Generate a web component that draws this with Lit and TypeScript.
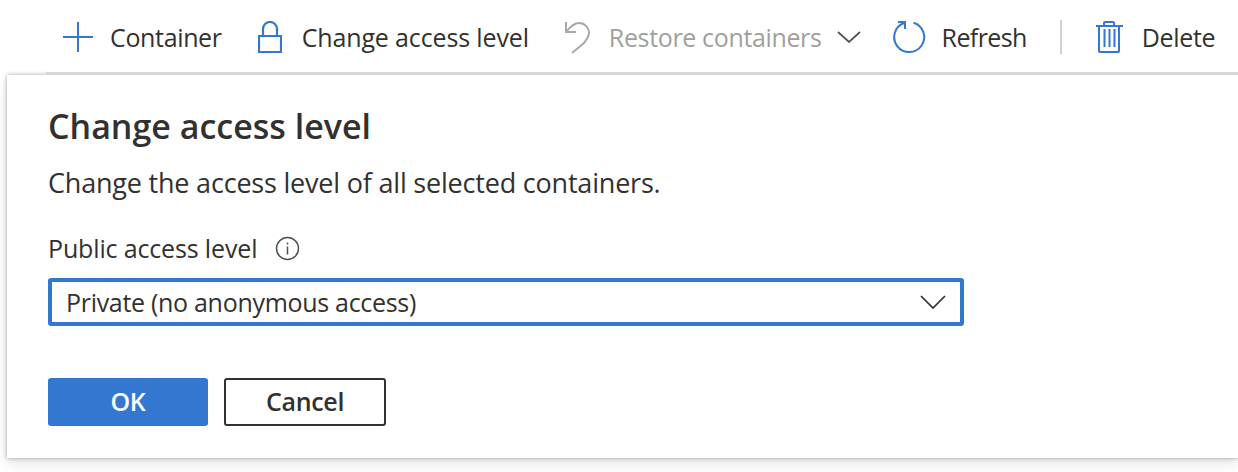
import { LitElement, html, css } from "lit";
import { customElement } from "lit/decorators.js";

@customElement("app-root")
export class AppRoot extends LitElement {
  static styles = css`
    :host {
      display: block;
      width: 1238px;
      height: 472px;
      overflow: hidden;
      background: #fff;
      font-family: "Open Sans", "Noto Sans", sans-serif;
      color: #323130;
      -webkit-font-smoothing: antialiased;
    }
    .toolbar {
      position: relative;
      z-index: 1;
      background: #fff;
      height: 75px;
      display: flex;
      align-items: center;
      margin-left: 46px;
      padding-left: 17px;
      padding-top: 2px;
      box-sizing: border-box;
      font-size: 25px;
      white-space: nowrap;
      border-bottom: 3px solid #d8d8d8;
    }
    .item { display: flex; align-items: center; }
    .item svg { display: block; flex: none; }
    .lbl { letter-spacing: -0.35px; }
    .lock-lbl { letter-spacing: -0.14px; margin-left: 20px; }
    .ref-lbl { letter-spacing: -0.6px; margin-left: 16px; }
    .del-lbl { letter-spacing: -0.35px; margin-left: 19px; }
    .dis { color: #a19f9d; }
    .sep { width: 2px; height: 34px; background: #d2d0ce; }
    .panel {
      margin: 0 0 0 7px;
      height: 383px;
      box-sizing: border-box;
      background: #fff;
      box-shadow: 0 0 4px rgba(0,0,0,.35), 0 6px 12px rgba(0,0,0,.1);
      padding: 27px 0 0 41px;
      position: relative;
    }
    h1 { margin: 0; font-size: 34px; line-height: 48px; font-weight: 600; letter-spacing: 0; }
    .desc { margin-top: 14px; font-size: 27px; line-height: 38px; letter-spacing: -0.2px; }
    .label { margin-top: 27px; display: flex; align-items: center; gap: 18px; font-size: 25px; line-height: 38px; letter-spacing: -0.15px; }
    .select {
      margin-top: 11px;
      width: 916px;
      height: 48px;
      box-sizing: border-box;
      border: 4px solid #3277d0;
      border-radius: 3px;
      display: flex;
      align-items: center;
      justify-content: space-between;
      padding: 0 14px;
      font-size: 25px;
      letter-spacing: -0.3px;
    }
    .btns { margin-top: 52px; display: flex; gap: 16px; }
    .btn {
      height: 48px;
      box-sizing: border-box;
      display: flex;
      align-items: center;
      justify-content: center;
      border-radius: 3px;
      font-size: 25px;
      font-weight: 600;
      letter-spacing: -0.3px;
      padding-bottom: 2px;
    }
    .ok { width: 160px; background: #3477d0; color: #fff; }
    .cancel { width: 162px; border: 2px solid #323130; background: #fff; }
  `;

  render() {
    return html`
      <div class="toolbar">
        <div class="item">
          <svg width="30" height="30" viewBox="0 0 30 30" fill="none" stroke="#3277d0" stroke-width="2"><path d="M15 0v30M0 15h30"/></svg>
          <span class="lbl" style="margin-left:17px">Container</span>
        </div>
        <div class="item" style="margin-left:36px">
          <svg width="24" height="32" viewBox="0 0 24 32" fill="none" stroke="#3277d0" stroke-width="2.200"><path d="M1 15h22v16H1zM5 15V8a7 7 0 0 1 14 0v7"/></svg>
          <span class="lock-lbl">Change access level</span>
        </div>
        <div class="item" style="margin-left:35px">
          <svg width="26" height="33" viewBox="0 0 26 33" fill="none" stroke="#a8a8a8" stroke-width="2"><path d="M2 1v10h10M2 11C6 6 10 2 15 2c6 0 10 5 10 10 0 4-3 7-5 10L8 32"/></svg>
          <span class="lbl dis" style="margin-left:19px">Restore containers</span>
          <svg style="margin-left:15px" width="24" height="12" viewBox="0 0 24 12" fill="none" stroke="#505050" stroke-width="1.700"><path d="M1 1l11 10L23 1"/></svg>
        </div>
        <div class="item" style="margin-left:32px">
          <svg width="33" height="33" viewBox="0 0 33 33" fill="none" stroke="#3277d0" stroke-width="2"><path d="M20.500 1.700A15 15 0 1 1 11 2M5 1h7v7"/></svg>
          <span class="ref-lbl">Refresh</span>
        </div>
        <div class="sep" style="margin-left:33px"></div>
        <div class="item" style="margin-left:34px">
          <svg width="27" height="32" viewBox="0 0 27 32" fill="none" stroke="#3277d0" stroke-width="2"><path d="M0 5h27M3 5v25a1 1 0 0 0 1 1h18a1 1 0 0 0 1-1V5M8 5V2a1 1 0 0 1 1-1h8a1 1 0 0 1 1 1v3M8.500 8v18M13.500 8v18M18.500 8v18"/></svg>
          <span class="del-lbl">Delete</span>
        </div>
      </div>
      <div class="panel">
        <h1>Change access level</h1>
        <div class="desc">Change the access level of all selected containers.</div>
        <div class="label">
          <span>Public access level</span>
          <svg width="25" height="25" viewBox="0 0 25 25" fill="none" stroke="#505050" stroke-width="1.500"><circle cx="12.500" cy="12.500" r="11"/><path d="M12.500 10.500v8M12.500 6.500v2"/></svg>
        </div>
        <div class="select">
          <span>Private (no anonymous access)</span>
          <svg width="26" height="14" viewBox="0 0 26 14" fill="none" stroke="#323130" stroke-width="1.700"><path d="M1 1l12 12L25 1"/></svg>
        </div>
        <div class="btns">
          <div class="btn ok">OK</div>
          <div class="btn cancel">Cancel</div>
        </div>
      </div>
    `;
  }
}
